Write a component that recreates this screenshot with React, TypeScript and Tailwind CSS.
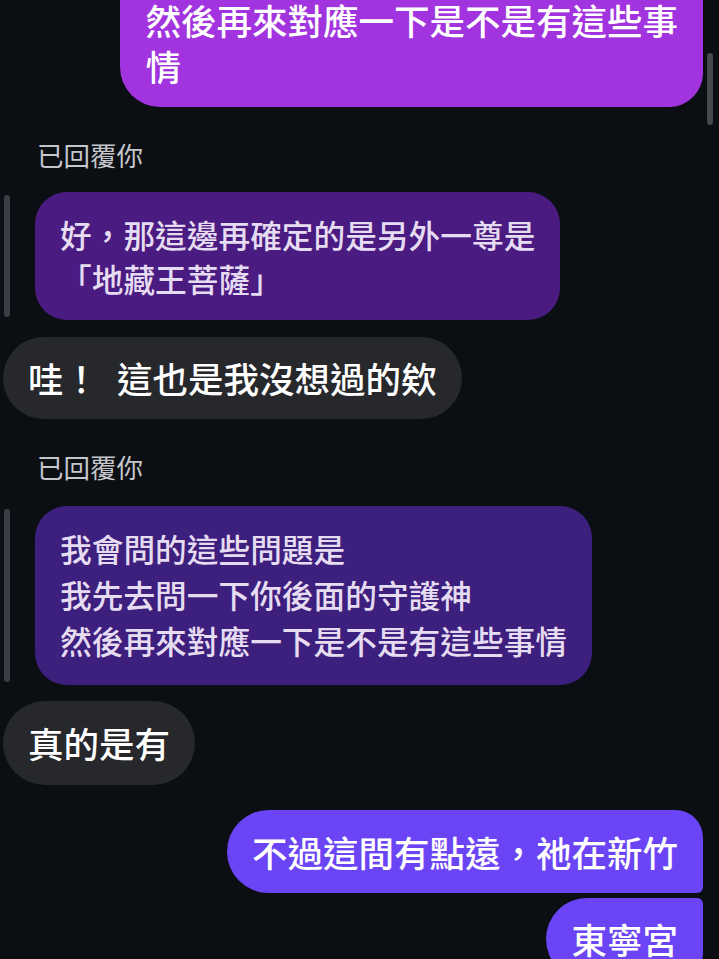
import React from "react";

const font = "font-['Noto_Sans_CJK_TC','Noto_Sans_CJK_SC',sans-serif]";

function RepliedLabel({ className = "" }: { className?: string }) {
  return (
    <div className={`ml-[37px] text-[26.5px] leading-[34px] text-[#c4c6cc] ${className}`}>
      已回覆你
    </div>
  );
}

function Quoted({ lines, className = "", bubble = "" }: { lines: string[]; className?: string; bubble?: string }) {
  return (
    <div className={`flex items-stretch ${className}`}>
      <div className="ml-[4px] my-[3px] w-[6px] rounded-full bg-[#3a3d43]" />
      <div className={`ml-[25px] px-[25px] rounded-[32px] text-[31.7px] font-medium text-[#e6dcf2] ${bubble}`}>
        {lines.map((l, i) => (
          <div key={i} className="whitespace-nowrap">
            {l}
          </div>
        ))}
      </div>
    </div>
  );
}

export default function App() {
  return (
    <div className={`relative h-[959px] w-[719px] overflow-hidden bg-[#0b0e13] ${font}`}>
      <div className="flex flex-col -mt-[21px]">
        {/* last sent message, partially scrolled off */}
        <div className="self-end mr-[16px] px-[25px] py-[18px] text-[35.5px] font-medium leading-[46px] text-white bg-[#a134de] rounded-t-[8px] rounded-bl-[40px] rounded-br-[34px] whitespace-nowrap">
          <div>然後再來對應一下是不是有這些事</div>
          <div>情</div>
        </div>

        <RepliedLabel className="mt-[31px]" />
        <Quoted
          className="mt-[20px]"
          bubble="py-[20px] leading-[44px] bg-[#4a1b80]"
          lines={["好，那這邊再確定的是另外一尊是", "「地藏王菩薩」"]}
        />

        <div className="self-start ml-[3px] mt-[17px] px-[25px] py-[18px] rounded-[41px] bg-[#26282c] text-[35.5px] font-medium leading-[46px] text-white whitespace-nowrap">
          哇！<span className="inline-block w-[18px]" />這也是我沒想過的欸
        </div>

        <RepliedLabel className="mt-[31px]" />
        <Quoted
          className="mt-[22px]"
          bubble="pt-[19px] pb-[22px] leading-[46px] bg-[#3d1f7d]"
          lines={["我會問的這些問題是", "我先去問一下你後面的守護神", "然後再來對應一下是不是有這些事情"]}
        />

        <div className="self-start ml-[3px] mt-[16px] px-[25px] py-[19px] rounded-[42px] bg-[#26282c] text-[35.5px] font-medium leading-[46px] text-white whitespace-nowrap">
          真的是有
        </div>

        <div className="self-end mr-[16px] mt-[25px] px-[25px] py-[18px] text-[35.5px] font-medium leading-[47px] text-white bg-[#6b45f5] rounded-l-[42px] rounded-tr-[28px] rounded-br-[6px] whitespace-nowrap">
          不過這間有點遠，祂在新竹
        </div>
        <div className="self-end mr-[16px] mt-[5px] px-[25px] py-[18px] text-[35.5px] font-medium leading-[46px] text-white bg-[#6b45f5] rounded-l-[42px] rounded-tr-[6px] rounded-br-[28px] whitespace-nowrap">
          東寧宮
        </div>
      </div>

      {/* scrollbar thumb */}
      <div className="absolute left-[707px] top-[53px] h-[72px] w-[6px] rounded-full bg-[#45484d]" />
    </div>
  );
}
